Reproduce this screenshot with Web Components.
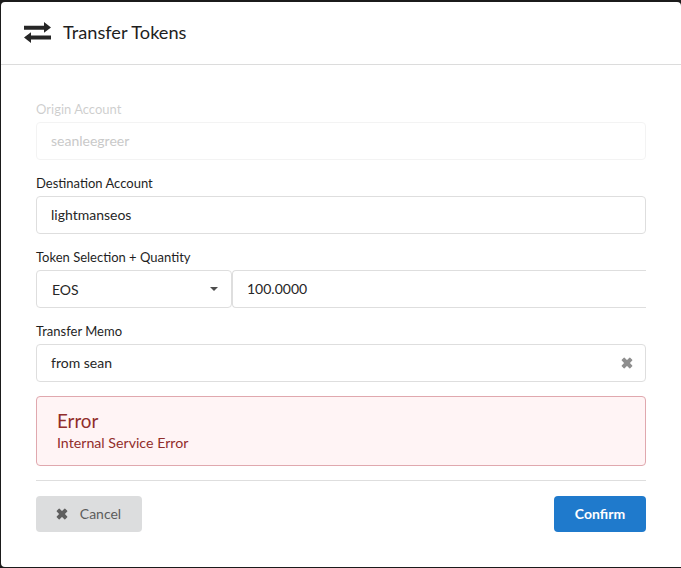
<!DOCTYPE html>
<html><head><meta charset="utf-8">
<style>
html,body{margin:0;height:568px;overflow:hidden;background:#1b1b1b}
body{font-family:Lato,"Open Sans",sans-serif;color:#1f1f1f}
</style></head><body>
<transfer-modal>
  <modal-header slot="header">Transfer Tokens</modal-header>
  <form-field label="Origin Account" disabled><text-box disabled>seanleegreer</text-box></form-field>
  <form-field label="Destination Account"><text-box>lightmanseos</text-box></form-field>
  <form-field label="Token Selection + Quantity">
    <div style="display:flex">
      <select-box style="width:196px;flex:none">EOS</select-box>
      <text-box noright style="flex:1">100.0000</text-box>
    </div>
  </form-field>
  <form-field label="Transfer Memo"><text-box clear>from sean</text-box></form-field>
  <error-box title="Error">Internal Service Error</error-box>
  <modal-actions></modal-actions>
</transfer-modal>
<script>
const X='<svg viewBox="0 0 12 12" width="VV" height="VV" aria-hidden="true"><path d="M1.2 3.2 3.2 1.2 6 4 8.8 1.2 10.8 3.2 8 6 10.8 8.8 8.8 10.8 6 8 3.2 10.8 1.2 8.8 4 6Z" fill="CC" stroke="CC" stroke-width="1.2" stroke-linejoin="round"/></svg>';
const xIcon=(s,c)=>X.replace(/VV/g,s).replace(/CC/g,c);
function def(name,html,init){
  customElements.define(name,class extends HTMLElement{
    constructor(){super();this.attachShadow({mode:'open'}).innerHTML=typeof html==='function'?html(this):html;}
    connectedCallback(){init&&init(this,this.shadowRoot);}
  });
}
def('transfer-modal',`<style>
:host{display:block;box-sizing:border-box;height:565px;margin:2px 0 0 1px;background:#fff;border-radius:4px 4px 0 4px;overflow:hidden}
.body{padding:36px 35px 0;display:flex;flex-direction:column}
</style><slot name="header"></slot><div class="body"><slot></slot></div>`);
def('modal-header',`<style>
:host{display:flex;align-items:center;gap:12px;box-sizing:border-box;height:63px;padding:0 0 0 23px;border-bottom:1px solid #dcdcdc;font-size:18.2px;color:#1e1e1e}
svg{display:block;flex:none;margin-top:-2px}
span{position:relative;top:-1px}
</style><svg width="27" height="21" viewBox="0 0 27 21" aria-hidden="true"><path fill="#262626" d="M0 3.7H20V0L27 5.4 20 10.8V7.7H0ZM7 10.2V13.6H27V17.6H7V21L0 15.6Z"/></svg><span><slot></slot></span>`);
def('form-field',el=>`<style>
:host{display:block;margin-bottom:15px}
label{display:block;font-size:13px;line-height:16px;margin-bottom:5px;color:#1f1f1f}
:host([disabled]) label{opacity:.22}
</style><label>${el.getAttribute('label')}</label><slot></slot>`);
def('text-box',el=>`<style>
:host{display:block;box-sizing:border-box;height:38px;border:1px solid #dedede;border-radius:4px;padding:0 14px;font-size:14px;line-height:36px;color:#262626;position:relative;background:#fff}
:host([disabled]){border-color:#f3f3f3;color:#c9c9c9}
:host([noright]){border-right:0;border-radius:4px 0 0 4px}
.x{position:absolute;right:12px;top:12px;display:block;line-height:0}
</style><slot></slot>${el.hasAttribute('clear')?`<span class="x">${xIcon(12,'#8e8e8e')}</span>`:''}`);
def('select-box',`<style>
:host{display:flex;align-items:center;justify-content:space-between;box-sizing:border-box;height:38px;border:1px solid #dedede;border-radius:4px;padding:0 13px 0 15px;font-size:14px;color:#262626;background:#fff}
i{width:0;height:0;border:4.5px solid transparent;border-top:4.5px solid #4d4d4d;border-bottom:0}
</style><slot></slot><i></i>`);
def('error-box',el=>`<style>
:host{display:block;box-sizing:border-box;height:70px;margin-top:-1px;padding:13px 20px;background:#fff4f5;border:1px solid #e0a8ae;border-radius:4px;color:#912d2b}
h4{margin:0;font-weight:400;font-size:18.8px;line-height:22px}
p{margin:1px 0 0;font-size:14.2px;line-height:19px}
</style><h4>${el.getAttribute('title')}</h4><p><slot></slot></p>`);
def('modal-actions',`<style>
:host{display:flex;justify-content:space-between;margin-top:14px;padding-top:15px;border-top:1px solid #dedede}
button{box-sizing:border-box;height:36px;border:0;border-radius:4px;font:14px Lato,sans-serif;padding:0 0 2px;display:flex;align-items:center;justify-content:center}
.c{width:106px;background:#dcddde;color:#5c5c5c;gap:11px}
.c svg{position:relative;top:1px;left:-1px}
.p{width:92px;background:#1f7acc;color:#fff;font-weight:700}
</style><button class="c">${xIcon(12,'#5f5f5f')}<span>Cancel</span></button><button class="p">Confirm</button>`);
</script>
</body></html>
